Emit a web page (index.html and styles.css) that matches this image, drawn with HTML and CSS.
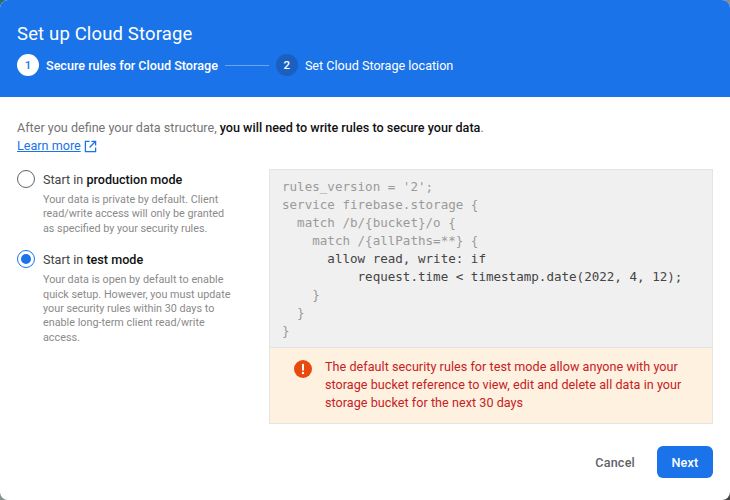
FILE: index.html
```html
<!DOCTYPE html>
<html lang="en">
<head>
<meta charset="utf-8">
<title>Set up Cloud Storage</title>
<link rel="stylesheet" href="styles.css">
</head>
<body>
<div class="dialog">
  <header class="head">
    <h1 class="title">Set up Cloud Storage</h1>
    <div class="stepper">
      <span class="num num-on">1</span>
      <span class="step-label step-on">Secure rules for Cloud Storage</span>
      <span class="line"></span>
      <span class="num num-off">2</span>
      <span class="step-label">Set Cloud Storage location</span>
    </div>
  </header>
  <main class="body">
    <p class="intro">After you define your data structure, <b>you will need to write rules to secure your data</b>.</p>
    <a class="learn"><span class="learn-text">Learn more</span><svg class="ext" width="13" height="13" viewBox="0 0 14 14"><path d="M6 1.5H1.5v11h11V8M8 1.5h4.5V6M12.3 1.7 6 8" fill="none" stroke="#1a73e8" stroke-width="1.4"/></svg></a>
    <div class="cols">
      <div class="options">
        <div class="opt">
          <span class="radio"></span>
          <div class="opt-text">
            <div class="opt-title">Start in <b>production mode</b></div>
            <div class="opt-desc">Your data is private by default. Client read/write access will only be granted as specified by your security rules.</div>
          </div>
        </div>
        <div class="opt">
          <span class="radio radio-on"><span class="dot"></span></span>
          <div class="opt-text">
            <div class="opt-title">Start in <b>test mode</b></div>
            <div class="opt-desc">Your data is open by default to enable quick setup. However, you must update your security rules within 30 days to enable long-term client read/write access.</div>
          </div>
        </div>
      </div>
      <div class="panel">
        <div class="code">
          <div class="ln">rules_version = '2';</div>
          <div class="ln">service firebase.storage {</div>
          <div class="ln">  match /b/{bucket}/o {</div>
          <div class="ln">    match /{allPaths=**} {</div>
          <div class="ln hl">      allow read, write: if</div>
          <div class="ln hl">          request.time &lt; timestamp.date(2022, 4, 12);</div>
          <div class="ln">    }</div>
          <div class="ln">  }</div>
          <div class="ln">}</div>
        </div>
        <div class="warn">
          <svg class="warn-icon" width="18" height="18" viewBox="0 0 18 18"><circle cx="9" cy="9" r="9" fill="#e8490f"/><rect x="8" y="3.8" width="2" height="7" rx="0.8" fill="#fff"/><circle cx="9" cy="13" r="1.2" fill="#fff"/></svg>
          <div class="warn-text">The default security rules for test mode allow anyone with your storage bucket reference to view, edit and delete all data in your storage bucket for the next 30 days</div>
        </div>
      </div>
    </div>
  </main>
  <footer class="foot">
    <button class="cancel">Cancel</button>
    <button class="next">Next</button>
  </footer>
</div>
</body>
</html>
```
FILE: styles.css
```css
* { box-sizing: border-box; }
html, body { margin: 0; height: 500px; overflow: hidden; }
body { font-family: Roboto, sans-serif; background: linear-gradient(135deg, #2f6b5f 0%, #9a9a9a 50%, #444 100%); }
.dialog { width: 730px; height: 500px; background: #fff; border-radius: 8px; overflow: hidden; display: flex; flex-direction: column; }
.head { background: #1a73e8; height: 97px; padding: 23px 17px 0; color: #fff; }
.title { margin: 0; font-size: 18.5px; font-weight: 400; line-height: 22px; letter-spacing: 0.15px; }
.stepper { display: flex; align-items: center; margin-top: 9px; }
.num { width: 22px; height: 22px; border-radius: 50%; display: flex; align-items: center; justify-content: center; font-size: 11.5px; font-weight: 500; }
.num-on { background: #fff; color: #1a73e8; }
.num-off { background: #1b5fc0; color: #fff; }
.step-label { font-size: 12.6px; margin-left: 7px; }
.step-on { font-weight: 500; }
.line { width: 44px; height: 1px; background: #6ba4ef; margin: 0 7px; }
.body { flex: 1; padding: 0 17px; }
.intro { margin: 22px 0 0; font-size: 12.6px; line-height: 18px; color: #757575; }
.intro b { color: #111; font-weight: 500; }
.learn { font-size: 12.6px; line-height: 18px; color: #1a73e8; display: flex; align-items: center; }
.learn-text { text-decoration: underline; }
.ext { margin-left: 3px; }
.cols { display: flex; justify-content: space-between; margin-top: 14px; }
.options { width: 216px; padding-top: 2px; }
.opt { display: flex; margin-bottom: 15px; }
.radio { width: 18px; height: 18px; margin-top: -1px; border: 1.5px solid #5f6368; border-radius: 50%; flex: none; margin-right: 8px; display: flex; align-items: center; justify-content: center; }
.radio-on { border-color: #1a73e8; }
.dot { width: 10px; height: 10px; border-radius: 50%; background: #1a73e8; }
.opt-title { font-size: 12.6px; line-height: 18px; color: #444; }
.opt-title b { font-weight: 500; color: #111; }
.opt-desc { margin-top: 4px; font-size: 10.8px; line-height: 14.4px; color: #8a8a8a; }
.panel { width: 444px; border: 1px solid #e4e4e4; }
.code { height: 177px; background: #f0f0f0; padding: 8px 12px; font-family: "DejaVu Sans Mono", monospace; font-size: 12.55px; color: #9a9a9a; }
.ln { height: 18px; line-height: 18px; white-space: pre; }
.hl { color: #444; }
.warn { display: flex; background: #fef1e0; border-top: 1px solid #e4e4e4; padding: 10px 12px 9px 24px; height: 76px; }
.warn-icon { flex: none; margin: 2px 13px 0 0; }
.warn-text { font-size: 12.6px; line-height: 18px; color: #c5221f; letter-spacing: 0.04px; }
.foot { display: flex; justify-content: flex-end; align-items: center; padding: 0 17px 22px; gap: 22px; }
.cancel { border: 0; background: none; font: 500 12.6px Roboto, sans-serif; color: #5f6368; padding: 0; letter-spacing: 0.2px; }
.next { border: 0; background: #1a73e8; color: #fff; width: 56px; height: 32px; border-radius: 6px; font: 500 12.6px Roboto, sans-serif; letter-spacing: 0.2px; }
```
